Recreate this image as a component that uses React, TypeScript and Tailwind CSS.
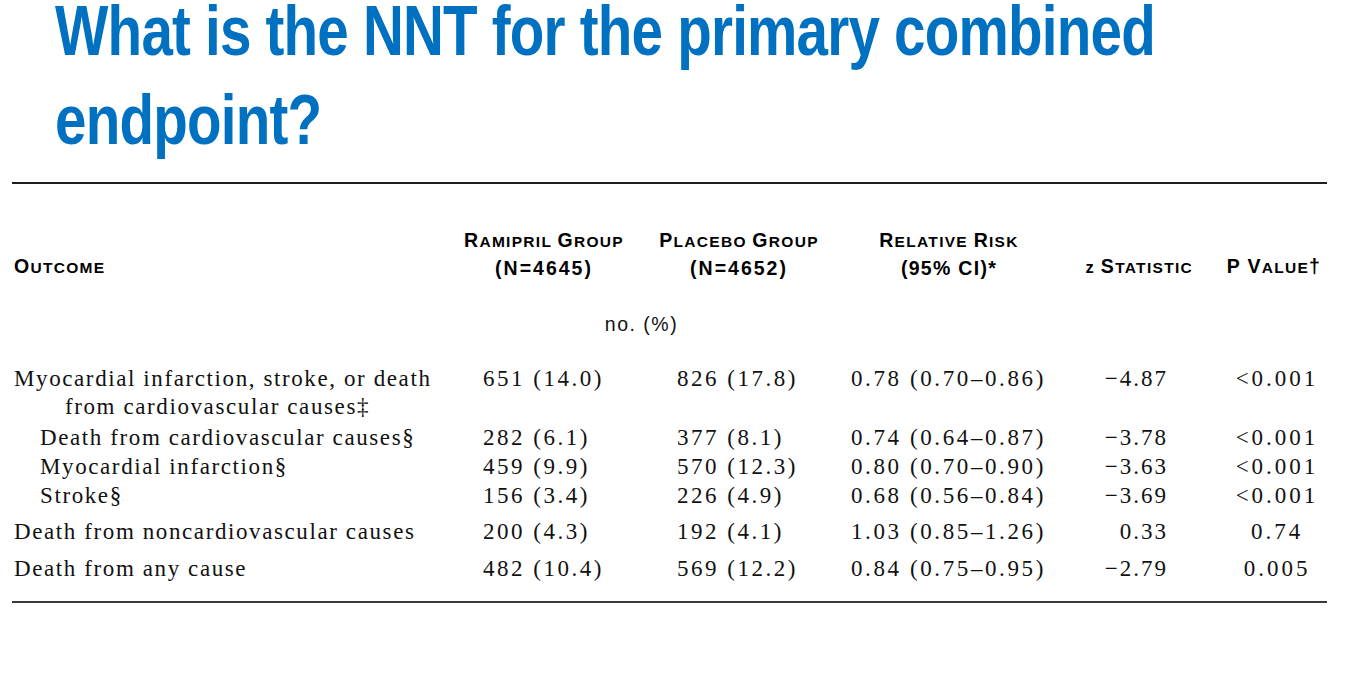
const sans = "font-['Liberation_Sans',Arial,sans-serif]"
const serif = "font-['Liberation_Serif','Times_New_Roman',serif]"

const cols = [
  "w-[450px] shrink-0 pl-[2px]",
  "w-[164px] shrink-0",
  "w-[164px] shrink-0 ml-[31px]",
  "w-[196px] shrink-0 ml-[30px]",
  "w-[153px] shrink-0",
  "flex-1",
]

const rows = [
  {
    label: "Myocardial infarction, stroke, or death",
    more: "from cardiovascular causes‡",
    indent: "",
    ram: "651 (14.0)",
    pla: "826 (17.8)",
    rr: "0.78 (0.70–0.86)",
    z: "−4.87",
    p: "<0.001",
    gap: "mt-[28px]",
  },
  { label: "Death from cardiovascular causes§", indent: "pl-[26px]", ram: "282 (6.1)", pla: "377 (8.1)", rr: "0.74 (0.64–0.87)", z: "−3.78", p: "<0.001", gap: "mt-[3px]" },
  { label: "Myocardial infarction§", indent: "pl-[26px]", ram: "459 (9.9)", pla: "570 (12.3)", rr: "0.80 (0.70–0.90)", z: "−3.63", p: "<0.001", gap: "mt-[1px]" },
  { label: "Stroke§", indent: "pl-[26px]", ram: "156 (3.4)", pla: "226 (4.9)", rr: "0.68 (0.56–0.84)", z: "−3.69", p: "<0.001", gap: "mt-[1px]" },
  { label: "Death from noncardiovascular causes", indent: "", ram: "200 (4.3)", pla: "192 (4.1)", rr: "1.03 (0.85–1.26)", z: "0.33", p: "0.74", gap: "mt-[8px]" },
  { label: "Death from any cause", indent: "", ram: "482 (10.4)", pla: "569 (12.2)", rr: "0.84 (0.75–0.95)", z: "−2.79", p: "0.005", gap: "mt-[9px]" },
]

function Cap({ big, small }: { big: string; small: string }) {
  return (
    <>
      <span className="text-[19.5px]">{big}</span>
      <span className="text-[15.5px]">{small}</span>
    </>
  )
}

export default function App() {
  return (
    <div className="w-[1349px] h-[678px] bg-white overflow-hidden">
      <h1 className="mt-[-14px] pl-[55px] whitespace-nowrap text-[71px] leading-[89px] font-bold tracking-[-1px] text-[#0070c0] font-['Liberation_Sans',Arial,sans-serif]">
        <span className="inline-block origin-left scale-x-[0.797]">
          What is the NNT for the primary combined
          <br />
          endpoint?
        </span>
      </h1>

      <div className="mx-[12px] w-[1315px] mt-[18px]">
        <div className="h-[2px] bg-[#1e1e1e]" />

        {/* header */}
        <div className={`flex items-end pt-[43px] whitespace-nowrap font-bold text-black tracking-[1.3px] leading-[26px] text-[19.5px] ${sans}`}>
          <div className={cols[0]}>
            <Cap big="O" small="UTCOME" />
          </div>
          <div className={`${cols[1]} text-center`}>
            <div>
              <Cap big="R" small="AMIPRIL " />
              <Cap big="G" small="ROUP" />
            </div>
            <div className="tracking-[2px]">(N=4645)</div>
          </div>
          <div className={`${cols[2]} text-center`}>
            <div>
              <Cap big="P" small="LACEBO " />
              <Cap big="G" small="ROUP" />
            </div>
            <div className="tracking-[2px]">(N=4652)</div>
          </div>
          <div className={`${cols[3]} text-center`}>
            <div>
              <Cap big="R" small="ELATIVE " />
              <Cap big="R" small="ISK" />
            </div>
            <div>(95% CI)*</div>
          </div>
          <div className={`${cols[4]} text-right pr-[7px]`}>
            <span className="text-[16.5px]">z </span>
            <Cap big="S" small="TATISTIC" />
          </div>
          <div className={`${cols[5]} text-center pl-[21px]`}>
            <Cap big="P V" small="ALUE" />
            <span>†</span>
          </div>
        </div>

        <div className={`mt-[30px] flex ${sans}`}>
          <div className={cols[0]} />
          <div className="w-[359px] text-center text-[19.5px] leading-[26px] tracking-[1.5px] text-[#111]">no. (%)</div>
        </div>

        {/* body */}
        <div className={`text-[23px] leading-[28px] text-[#111] ${serif}`}>
          {rows.map((r) => (
            <div key={r.label} className={`flex items-start ${r.gap}`}>
              <div className={`${cols[0]} tracking-[1.6px]`}>
                <div className={r.indent}>{r.label}</div>
                {r.more && <div className="pl-[51px]">{r.more}</div>}
              </div>
              <div className={`${cols[1]} pl-[21px] tracking-[2.5px]`}>{r.ram}</div>
              <div className={`${cols[2]} pl-[20px] tracking-[2.5px]`}>{r.pla}</div>
              <div className={`${cols[3]} tracking-[2.6px]`}>{r.rr}</div>
              <div className={`${cols[4]} text-right pr-[32px] tracking-[2px]`}>{r.z}</div>
              <div className={`${cols[5]} text-center pl-[27px] tracking-[3px]`}>{r.p}</div>
            </div>
          ))}
        </div>

        <div className="mt-[18px] h-[2px] bg-[#3a3a3a]" />
      </div>
    </div>
  )
}
